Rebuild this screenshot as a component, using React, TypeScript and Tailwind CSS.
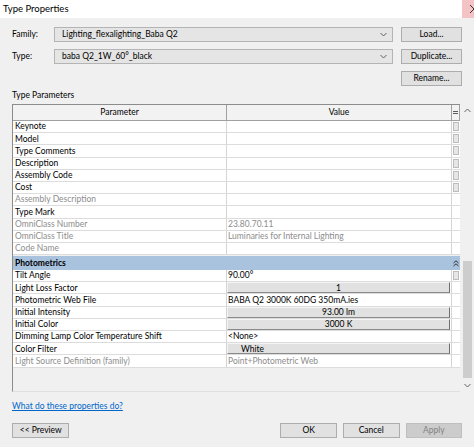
import React from 'react';

type Row = {
  name: string;
  value?: string;
  gray?: boolean;
  eq?: boolean;
  button?: boolean;
  swatch?: boolean;
};

const general: Row[] = [
  { name: 'Keynote', eq: true },
  { name: 'Model', eq: true },
  { name: 'Type Comments', eq: true },
  { name: 'Description', eq: true },
  { name: 'Assembly Code', eq: true },
  { name: 'Cost', eq: true },
  { name: 'Assembly Description', gray: true },
  { name: 'Type Mark' },
  { name: 'OmniClass Number', value: '23.80.70.11', gray: true },
  { name: 'OmniClass Title', value: 'Luminaries for Internal Lighting', gray: true },
  { name: 'Code Name', gray: true },
];

const photometrics: Row[] = [
  { name: 'Tilt Angle', value: '90.00°', eq: true },
  { name: 'Light Loss Factor', value: '1', button: true },
  { name: 'Photometric Web File', value: 'BABA Q2 3000K 60DG 350mA.ies' },
  { name: 'Initial Intensity', value: '93.00 lm', button: true },
  { name: 'Initial Color', value: '3000 K', button: true },
  { name: 'Dimming Lamp Color Temperature Shift', value: '<None>' },
  { name: 'Color Filter', value: 'White', swatch: true },
  { name: 'Light Source Definition (family)', value: 'Point+Photometric Web', gray: true },
];

function Chevron() {
  return (
    <svg width="7" height="5" viewBox="0 0 7 5" className="shrink-0">
      <path d="M0.5 1 L3.5 4 L6.5 1" fill="none" stroke="#606060" strokeWidth="1" />
    </svg>
  );
}

function Combo({ value }: { value: string }) {
  return (
    <div className="flex h-[15px] w-[339px] items-center justify-between border border-[#b4b4b4] bg-[#e5e5e5] pl-[7px] pr-[5px]">
      <span className="leading-none">{value}</span>
      <Chevron />
    </div>
  );
}

function Btn({ label, className = '' }: { label: string; className?: string }) {
  return (
    <div
      className={`flex h-[15px] items-center justify-center border border-[#adadad] bg-[#e1e1e1] leading-none ${className}`}
    >
      {label}
    </div>
  );
}

function ParamRow({ row }: { row: Row }) {
  const text = row.gray ? 'text-[#8d8d8d]' : 'text-black';
  return (
    <div className="flex h-[12.2px] border-b border-[#dcdcdc] bg-white">
      <div className={`flex w-[214px] items-center border-r border-[#d4d4d4] pl-[2px] leading-none ${text}`}>
        {row.name}
      </div>
      <div className="flex w-[225px] items-center border-r border-[#d4d4d4] leading-none">
        {row.button ? (
          <div className="flex h-[11px] w-[223px] items-center justify-center border border-[#f4f4f4] border-r-[#6e6e6e] border-b-[#8a8a8a] bg-[#e1e1e1]">
            {row.value}
          </div>
        ) : row.swatch ? (
          <div className="flex h-[11px] w-[223px] items-center border border-[#f4f4f4] border-r-[#6e6e6e] border-b-[#8a8a8a] bg-[#e1e1e1] pl-[13px]">
            {row.value}
          </div>
        ) : (
          <span className={`pl-[1px] ${text}`}>{row.value}</span>
        )}
      </div>
      <div className="flex w-[8px] items-start justify-center pt-[1px]">
        {row.eq && <div className="h-[9px] w-[6px] border border-[#bcbcbc] bg-[#e6e6e6]" />}
      </div>
    </div>
  );
}

export default function App() {
  return (
    <div className="h-[447px] w-[474px] overflow-hidden bg-[#f0f0f0] font-['Lato',sans-serif] text-[8.5px] text-black">
      {/* title bar */}
      <div className="flex h-[18px] items-center justify-between bg-white">
        <span className="pl-[3px] text-[9.5px]">Type Properties</span>
        <div className="flex h-[18px] w-[12px] items-center overflow-hidden bg-[#f3c3c6] pl-[7px]">
          <svg width="10" height="10" viewBox="0 0 10 10" className="shrink-0">
            <path d="M1 1 L9 9 M9 1 L1 9" stroke="#333" strokeWidth="1" />
          </svg>
        </div>
      </div>

      <div className="px-[12px]">
        {/* family / type */}
        <div className="flex pt-[9px]">
          <div className="flex w-[381px] flex-col gap-[7px]">
            <div className="flex items-center">
              <span className="w-[42px]">Family:</span>
              <Combo value="Lighting_flexalighting_Baba Q2" />
            </div>
            <div className="flex items-center">
              <span className="w-[42px]">Type:</span>
              <Combo value="baba Q2_1W_60°_black" />
            </div>
          </div>
          <div className="ml-[8px] flex w-[71px] flex-col gap-[7px]">
            <Btn label="Load..." />
            <Btn label="Duplicate..." />
            <Btn label="Rename..." />
          </div>
        </div>

        <div className="mt-[3px] h-[12px] leading-[12px]">Type Parameters</div>

        {/* table */}
        <div className="mt-[3px] flex h-[288px] w-[474px]">
          <div className="flex w-[448px] flex-col border-l border-t border-b border-[#8c8c8c] border-b-[#e0e0e0] bg-[#f0f0f0]">
            <div className="flex h-[16px] border-b border-[#a0a0a0] bg-[#f2f2f2]">
              <div className="flex w-[214px] items-center justify-center border-r border-[#a0a0a0]">Parameter</div>
              <div className="flex w-[225px] items-center justify-center border-r border-[#a0a0a0]">Value</div>
              <div className="flex w-[8px] items-center justify-center border-r border-[#a0a0a0]">
                <svg width="5" height="5" viewBox="0 0 5 5">
                  <path d="M0 1.5 H5 M0 3.5 H5" stroke="#333" strokeWidth="0.8" />
                </svg>
              </div>
            </div>
            {general.map((r) => (
              <ParamRow key={r.name} row={r} />
            ))}
            <div className="mt-[1px] flex h-[14px] items-center justify-between bg-[#a9c3df] pl-[2px] pr-[1px] font-bold">
              <span className="leading-none">Photometrics</span>
              <svg width="6" height="7" viewBox="0 0 6 7">
                <path d="M0.5 3 L3 0.8 L5.5 3 M0.5 6 L3 3.8 L5.5 6" fill="none" stroke="#333" strokeWidth="1" />
              </svg>
            </div>
            {photometrics.map((r) => (
              <ParamRow key={r.name} row={r} />
            ))}
          </div>
          {/* scrollbar */}
          <div className="flex w-[14px] flex-col items-center bg-[#f0f0f0]">
            <svg width="7" height="5" viewBox="0 0 7 5" className="mt-[4px]">
              <path d="M0.5 4 L3.5 1 L6.5 4" fill="none" stroke="#606060" strokeWidth="1" />
            </svg>
            <div className="mt-[148px] h-[117px] w-[9px] bg-[#cdcdcd]" />
            <div className="mt-[5px]">
              <Chevron />
            </div>
          </div>
        </div>

        <div className="mt-[8px] h-[12px] leading-[12px]">
          <span className="text-[#0066cc] underline">What do these properties do?</span>
        </div>

        <div className="mt-[11px] flex">
          <Btn label="<< Preview" className="w-[60px]" />
          <Btn label="OK" className="ml-[211px] w-[59px] border-[#0078d7]" />
          <Btn label="Cancel" className="ml-[6px] w-[59px]" />
          <div className="ml-[6px] flex h-[15px] w-[59px] items-center justify-center border border-[#bfbfbf] bg-[#cccccc] leading-none text-[#838383]">
            Apply
          </div>
        </div>
      </div>
    </div>
  );
}
